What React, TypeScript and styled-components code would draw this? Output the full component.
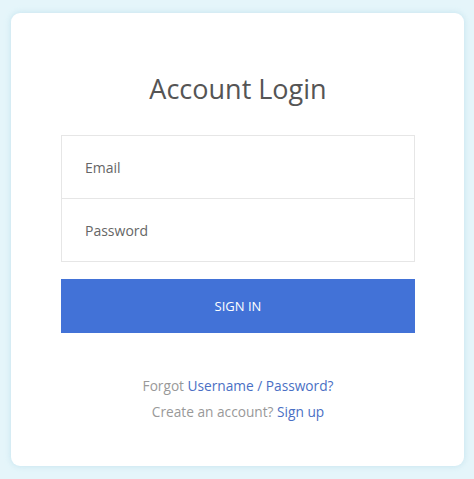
import React from 'react';
import styled, { createGlobalStyle } from 'styled-components';

const GlobalStyle = createGlobalStyle`
  * { box-sizing: border-box; }
  html, body {
    margin: 0;
    padding: 0;
    background: #e5f5fa;
    font-family: 'Open Sans', 'Liberation Sans', sans-serif;
  }
`;

const Page = styled.div`
  width: 474px;
  height: 479px;
  padding: 13px 10px 13px 11px;
`;

const Card = styled.div`
  width: 453px;
  height: 453px;
  background: #ffffff;
  border-radius: 9px;
  box-shadow: 0 0 6px rgba(170, 215, 230, 0.6);
  padding: 57px 49px 0 50px;
  display: flex;
  flex-direction: column;
  align-items: stretch;
`;

const Title = styled.h1`
  margin: 0 0 27px;
  font-size: 27px;
  line-height: 38px;
  font-weight: 400;
  color: #555555;
  text-align: center;
`;

const Fields = styled.div`
  border: 1px solid #e6e6e6;
  display: flex;
  flex-direction: column;
`;

const Field = styled.input<{ $last?: boolean }>`
  height: ${(p) => (p.$last ? 62 : 63)}px;
  border: 0;
  border-bottom: ${(p) => (p.$last ? '0' : '1px solid #e6e6e6')};
  padding: 0 23px;
  font-family: inherit;
  font-size: 14px;
  color: #666666;
  outline: none;
  background: transparent;

  &::placeholder {
    color: #666666;
  }
`;

const Button = styled.button`
  margin-top: 17px;
  height: 54px;
  border: 0;
  background: #4272d7;
  color: #ffffff;
  font-family: inherit;
  font-size: 13px;
  font-weight: 500;
  text-transform: uppercase;
  cursor: pointer;
`;

const Links = styled.div`
  margin-top: 40px;
  display: flex;
  flex-direction: column;
  align-items: center;
`;

const Line = styled.p`
  margin: 0;
  font-size: 13.7px;
  line-height: 26px;
  color: #999999;
`;

const Link = styled.a`
  color: #4a6fc4;
  text-decoration: none;
  cursor: pointer;
`;

export default function App() {
  return (
    <>
      <GlobalStyle />
      <Page>
        <Card>
          <Title>Account Login</Title>
          <Fields>
            <Field type="email" placeholder="Email" />
            <Field type="password" placeholder="Password" $last />
          </Fields>
          <Button>Sign in</Button>
          <Links>
            <Line>
              Forgot <Link>Username / Password?</Link>
            </Line>
            <Line>
              Create an account? <Link>Sign up</Link>
            </Line>
          </Links>
        </Card>
      </Page>
    </>
  );
}
